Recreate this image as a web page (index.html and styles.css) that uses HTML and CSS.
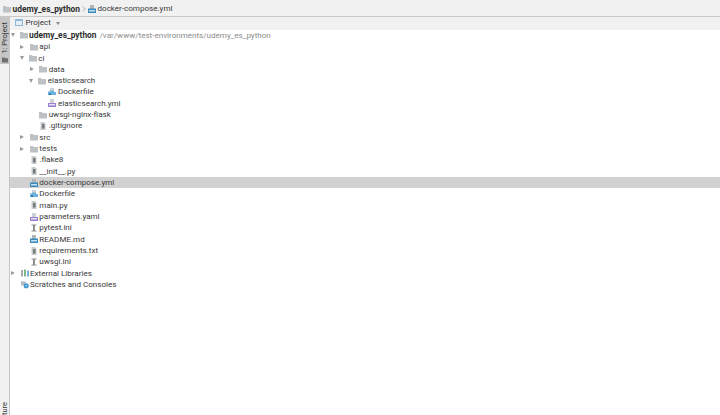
FILE: index.html
```html
<!DOCTYPE html>
<html lang="en">
<head>
  <meta charset="UTF-8">
  <title>udemy_es_python - docker-compose.yml</title>
  <link rel="stylesheet" href="styles.css">
</head>
<body>
  <svg class="defs" width="0" height="0">
    <symbol id="folder" viewBox="0 0 8 7"><path d="M0 0.500h3l0.500 1h4.500v5.500h-8z" fill="#bcc1c6"/></symbol>
    <symbol id="file" viewBox="0 0 8 8"><path d="M1.500 0h3.500l1.500 1.500v6.500h-5z" fill="#c9cccd"/><rect x="3" y="2" width="2.500" height="4.500" fill="#767b7f"/></symbol>
    <symbol id="ini" viewBox="0 0 8 8"><path d="M1.500 0.500h5v1h-1.500v5h1.500v1h-5v-1h1.500v-5h-1.500z" fill="#8b8f92"/></symbol>
    <symbol id="docker" viewBox="0 0 8 8"><path d="M2 0h4v4h-4z" fill="#ccd2d6"/><path d="M0 3.500h2v-1h4v1.500h2v3h-8z" fill="#6db2dc"/><rect x="1" y="5.500" width="2" height="1.500" fill="#2a6f9c"/></symbol>
    <symbol id="yaml" viewBox="0 0 8 8"><path d="M2 0h4v4h-4z" fill="#ccd2d6"/><rect x="0" y="4" width="8" height="4" fill="#9a80cc"/><rect x="1" y="5" width="6" height="1.500" fill="#e6def4"/></symbol>
    <symbol id="compose" viewBox="0 0 8 8"><path d="M2 0h4v4h-4z" fill="#b0b5b9"/><rect x="0" y="3.500" width="8" height="4.500" fill="#3c8aba"/><rect x="1" y="5" width="6" height="1.500" fill="#c2e0f2"/></symbol>
    <symbol id="libs" viewBox="0 0 8 7"><rect x="0" y="0.500" width="2" height="6.500" fill="#a4acb2"/><rect x="3" y="0" width="2" height="7" fill="#7db88a"/><rect x="6" y="1" width="2" height="6" fill="#7cb0d6"/></symbol>
    <symbol id="scratch" viewBox="0 0 10 9"><path d="M0 0h6v5h-6z" fill="#b4bac0"/><circle cx="6.500" cy="5.500" r="3.200" fill="#3c97d3"/><circle cx="6.500" cy="5.500" r="1" fill="#d8ecf8"/></symbol>
  </svg>

  <div class="breadcrumbs">
    <svg class="crumb-icon"><use href="#folder"/></svg>
    <span class="crumb-root">udemy_es_python</span>
    <span class="crumb-sep"></span>
    <svg class="crumb-icon"><use href="#compose"/></svg>
    <span class="crumb-file">docker-compose.yml</span>
  </div>

  <div class="workspace">
    <div class="sidebar">
      <div class="side-tab">
        <span class="side-label">1: Project</span>
        <svg class="side-icon" viewBox="0 0 7 6"><path d="M0 0h3l1 1h3v5h-7z" fill="#6f6f6f"/></svg>
      </div>
      <span class="side-structure">ture</span>
    </div>

    <div class="panel">
      <div class="panel-head">
        <svg class="panel-icon" viewBox="0 0 8 7"><rect width="8" height="7" fill="#8fb8d8"/><rect x="1" y="2" width="6" height="4" fill="#e4eef6"/></svg>
        <span class="panel-title">Project</span>
        <span class="caret-down"></span>
      </div>

      <div class="tree">
        <div class="row d0"><span class="arrow open"></span><svg class="ico"><use href="#folder"/></svg><b>udemy_es_python</b><span class="path">/var/www/test-environments/udemy_es_python</span></div>
        <div class="row d1"><span class="arrow"></span><svg class="ico"><use href="#folder"/></svg>api</div>
        <div class="row d1"><span class="arrow open"></span><svg class="ico"><use href="#folder"/></svg>ci</div>
        <div class="row d2"><span class="arrow"></span><svg class="ico"><use href="#folder"/></svg>data</div>
        <div class="row d2"><span class="arrow open"></span><svg class="ico"><use href="#folder"/></svg>elasticsearch</div>
        <div class="row d3"><span class="arrow none"></span><svg class="ico"><use href="#docker"/></svg>Dockerfile</div>
        <div class="row d3"><span class="arrow none"></span><svg class="ico"><use href="#yaml"/></svg>elasticsearch.yml</div>
        <div class="row d2"><span class="arrow none"></span><svg class="ico"><use href="#folder"/></svg>uwsgi-nginx-flask</div>
        <div class="row d2"><span class="arrow none"></span><svg class="ico"><use href="#file"/></svg>.gitignore</div>
        <div class="row d1"><span class="arrow"></span><svg class="ico"><use href="#folder"/></svg>src</div>
        <div class="row d1"><span class="arrow"></span><svg class="ico"><use href="#folder"/></svg>tests</div>
        <div class="row d1"><span class="arrow none"></span><svg class="ico"><use href="#file"/></svg>.flake8</div>
        <div class="row d1"><span class="arrow none"></span><svg class="ico"><use href="#file"/></svg>__init__.py</div>
        <div class="row d1 selected"><span class="arrow none"></span><svg class="ico"><use href="#compose"/></svg>docker-compose.yml</div>
        <div class="row d1"><span class="arrow none"></span><svg class="ico"><use href="#docker"/></svg>Dockerfile</div>
        <div class="row d1"><span class="arrow none"></span><svg class="ico"><use href="#file"/></svg>main.py</div>
        <div class="row d1"><span class="arrow none"></span><svg class="ico"><use href="#yaml"/></svg>parameters.yaml</div>
        <div class="row d1"><span class="arrow none"></span><svg class="ico"><use href="#ini"/></svg>pytest.ini</div>
        <div class="row d1"><span class="arrow none"></span><svg class="ico"><use href="#compose"/></svg>README.md</div>
        <div class="row d1"><span class="arrow none"></span><svg class="ico"><use href="#file"/></svg>requirements.txt</div>
        <div class="row d1"><span class="arrow none"></span><svg class="ico"><use href="#ini"/></svg>uwsgi.ini</div>
        <div class="row d0"><span class="arrow"></span><svg class="ico"><use href="#libs"/></svg>External Libraries</div>
        <div class="row d0"><span class="arrow none"></span><svg class="ico"><use href="#scratch"/></svg>Scratches and Consoles</div>
      </div>
    </div>
  </div>
</body>
</html>
```

FILE: styles.css
```css
* {
  margin: 0;
  padding: 0;
  box-sizing: border-box;
}

html, body {
  height: 100%;
  overflow: hidden;
}

body {
  display: flex;
  flex-direction: column;
  font-family: Roboto, "Noto Sans", sans-serif;
  font-size: 8.050px;
  color: #3a3a3a;
  background: #fff;
}

.defs {
  position: absolute;
}

.breadcrumbs {
  display: flex;
  align-items: center;
  height: 17px;
  padding: 1px 0 0 3px;
  background: #f1f1f1;
  border-bottom: 1px solid #c9c9c9;
}

.crumb-icon {
  width: 8px;
  height: 8px;
  margin-right: 1.500px;
}

.crumb-root {
  font-size: 8.400px;
  font-weight: 700;
  color: #2e2e2e;
}

.crumb-sep {
  width: 4px;
  height: 4px;
  margin: 0 3.500px 0 0.500px;
  border-top: 1px solid #c4c4c4;
  border-right: 1px solid #c4c4c4;
  transform: rotate(45deg);
}

.crumb-file {
  color: #3a3a3a;
}

.workspace {
  flex: 1;
  display: flex;
  min-height: 0;
}

.sidebar {
  position: relative;
  width: 10px;
  background: #f1f1f1;
  border-right: 1px solid #c4c4c4;
  overflow: hidden;
}

.side-tab {
  display: flex;
  flex-direction: column;
  align-items: center;
  gap: 3px;
  height: 47px;
  padding-top: 5px;
  background: #c6c6c6;
}

.side-label {
  writing-mode: vertical-rl;
  transform: rotate(180deg);
  font-size: 7.500px;
  line-height: 9px;
  color: #333;
}

.side-icon {
  width: 6px;
  height: 6px;
}

.side-structure {
  position: absolute;
  left: 0;
  bottom: 0;
  writing-mode: vertical-rl;
  transform: rotate(180deg);
  font-size: 7.500px;
  line-height: 9px;
  color: #333;
}

.panel {
  flex: 1;
  min-width: 0;
}

.panel-head {
  display: flex;
  align-items: center;
  height: 12.700px;
  padding: 0 0 1px 5px;
  background: #f1f1f1;
}

.panel-icon {
  width: 8px;
  height: 7px;
  margin-right: 2.500px;
}

.panel-title {
  color: #3a3a3a;
}

.caret-down {
  width: 0;
  height: 0;
  margin: 1px 0 0 5px;
  border-left: 2.500px solid transparent;
  border-right: 2.500px solid transparent;
  border-top: 3px solid #8a8a8a;
}

.row {
  display: flex;
  align-items: center;
  height: 11.340px;
  white-space: nowrap;
}

.row.selected {
  background: #d1d1d1;
}

.d1 { padding-left: 9.330px; }
.d2 { padding-left: 18.660px; }
.d3 { padding-left: 27.990px; }

.arrow {
  flex: none;
  width: 0;
  height: 0;
  margin: 0 5.500px 0 1px;
  border-top: 2.500px solid transparent;
  border-bottom: 2.500px solid transparent;
  border-left: 4px solid #9a9a9a;
}

.arrow.open {
  margin: 0 5px 0 0.500px;
  border-left: 2.500px solid transparent;
  border-right: 2.500px solid transparent;
  border-top: 4px solid #9a9a9a;
  border-bottom: 0;
}

.arrow.none {
  width: 4px;
  border: 0;
  visibility: hidden;
}

.ico {
  flex: none;
  width: 8px;
  height: 8px;
  margin-right: 1.500px;
}

.row b {
  font-size: 8.400px;
  font-weight: 700;
  color: #2e2e2e;
}

.path {
  margin-left: 3px;
  color: #8c8c8c;
}
```
